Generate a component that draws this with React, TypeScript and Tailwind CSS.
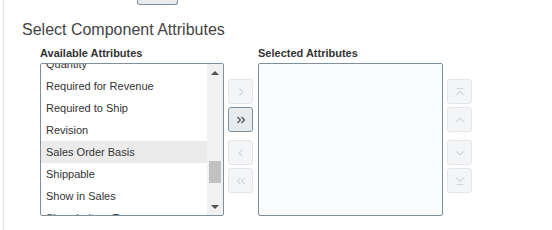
import React from 'react';

const items = [
  'Quantity',
  'Required for Revenue',
  'Required to Ship',
  'Revision',
  'Sales Order Basis',
  'Shippable',
  'Show in Sales',
  'Show in Item Types',
  'Special Order',
];

type IconName = 'right' | 'allRight' | 'left' | 'allLeft' | 'top' | 'up' | 'down' | 'bottom';

function Icon({ name }: { name: IconName }) {
  const paths: Record<IconName, string> = {
    right: 'M4.5 2.5L8 6l-3.5 3.5',
    allRight: 'M2.5 3l3 3-3 3M6.5 3l3 3-3 3',
    left: 'M7.5 2.5L4 6l3.5 3.5',
    allLeft: 'M5.5 3l-3 3 3 3M9.5 3l-3 3 3 3',
    top: 'M2.5 2.5h7M2.5 9L6 5.5 9.5 9',
    up: 'M2.5 7.5L6 4l3.5 3.5',
    down: 'M2.5 4.5L6 8l3.5-3.5',
    bottom: 'M2.5 9.5h7M2.5 3L6 6.5 9.5 3',
  };
  return (
    <svg width="12" height="12" viewBox="0 0 12 12" fill="none" stroke="currentColor" strokeWidth="1.1">
      <path d={paths[name]} />
    </svg>
  );
}

function MoveButton({ icon, active = false }: { icon: IconName; active?: boolean }) {
  return (
    <button
      className={`w-[25px] h-[25px] flex items-center justify-center rounded-[3px] border ${
        active
          ? 'bg-[#e8ebee] border-[#7f909c] text-[#3e4a55]'
          : 'bg-[#f4f5f7] border-[#e2e5e9] text-[#d2d6db]'
      }`}
    >
      <Icon name={icon} />
    </button>
  );
}

function ButtonColumn({ icons, activeIdx }: { icons: IconName[]; activeIdx?: number }) {
  return (
    <div className="flex flex-col pt-[32px] gap-[8px]">
      <div className="flex flex-col gap-[3px]">
        <MoveButton icon={icons[0]} active={activeIdx === 0} />
        <MoveButton icon={icons[1]} active={activeIdx === 1} />
      </div>
      <div className="flex flex-col gap-[3px]">
        <MoveButton icon={icons[2]} active={activeIdx === 2} />
        <MoveButton icon={icons[3]} active={activeIdx === 3} />
      </div>
    </div>
  );
}

export default function App() {
  return (
    <div className="w-[552px] h-[230px] bg-white overflow-hidden font-['Liberation_Sans',Arial,sans-serif]">
      <div className="ml-[3px] h-full border-l border-[#e3e3e3]">
        <div className="ml-[133px] w-[41px] h-[5px] border border-t-0 border-[#7f909c] rounded-b-[3px] bg-[#e8ebee]" />

        <h2 className="mt-[15px] ml-[18px] text-[16px] leading-[20px] text-[#444]">Select Component Attributes</h2>

        <div className="mt-[7px] ml-[36px] flex gap-[4px]">
          <div className="flex flex-col">
            <div className="text-[11px] leading-[13px] font-bold text-[#333] mb-[3px]">Available Attributes</div>
            <div className="w-[184px] h-[153px] border border-[#7f909c] rounded-[2px] bg-white flex overflow-hidden">
              <div className="flex-1 overflow-hidden">
                <div className="-mt-[11px]">
                  {items.map((item) => (
                    <div
                      key={item}
                      className={`h-[22px] pl-[5px] flex items-center text-[11px] text-[#333] whitespace-nowrap ${
                        item === 'Sales Order Basis' ? 'bg-[#ebebeb]' : ''
                      }`}
                    >
                      {item}
                    </div>
                  ))}
                </div>
              </div>
              <div className="w-[16px] bg-[#f1f1f1] flex flex-col">
                <div className="h-[17px] flex items-center justify-center">
                  <div className="w-0 h-0 border-x-[4px] border-x-transparent border-b-[4px] border-b-[#505050]" />
                </div>
                <div className="flex-1 px-[2px]">
                  <div className="mt-[80px] h-[22px] bg-[#c1c1c1]" />
                </div>
                <div className="h-[17px] flex items-center justify-center">
                  <div className="w-0 h-0 border-x-[4px] border-x-transparent border-t-[4px] border-t-[#505050]" />
                </div>
              </div>
            </div>
          </div>

          <ButtonColumn icons={['right', 'allRight', 'left', 'allLeft']} activeIdx={1} />

          <div className="flex flex-col ml-[1px]">
            <div className="text-[11px] leading-[13px] font-bold text-[#333] mb-[3px]">Selected Attributes</div>
            <div className="w-[185px] h-[153px] border border-[#7f909c] rounded-[2px] bg-[#f9fbfd]" />
          </div>

          <ButtonColumn icons={['top', 'up', 'down', 'bottom']} />
        </div>
      </div>
    </div>
  );
}
